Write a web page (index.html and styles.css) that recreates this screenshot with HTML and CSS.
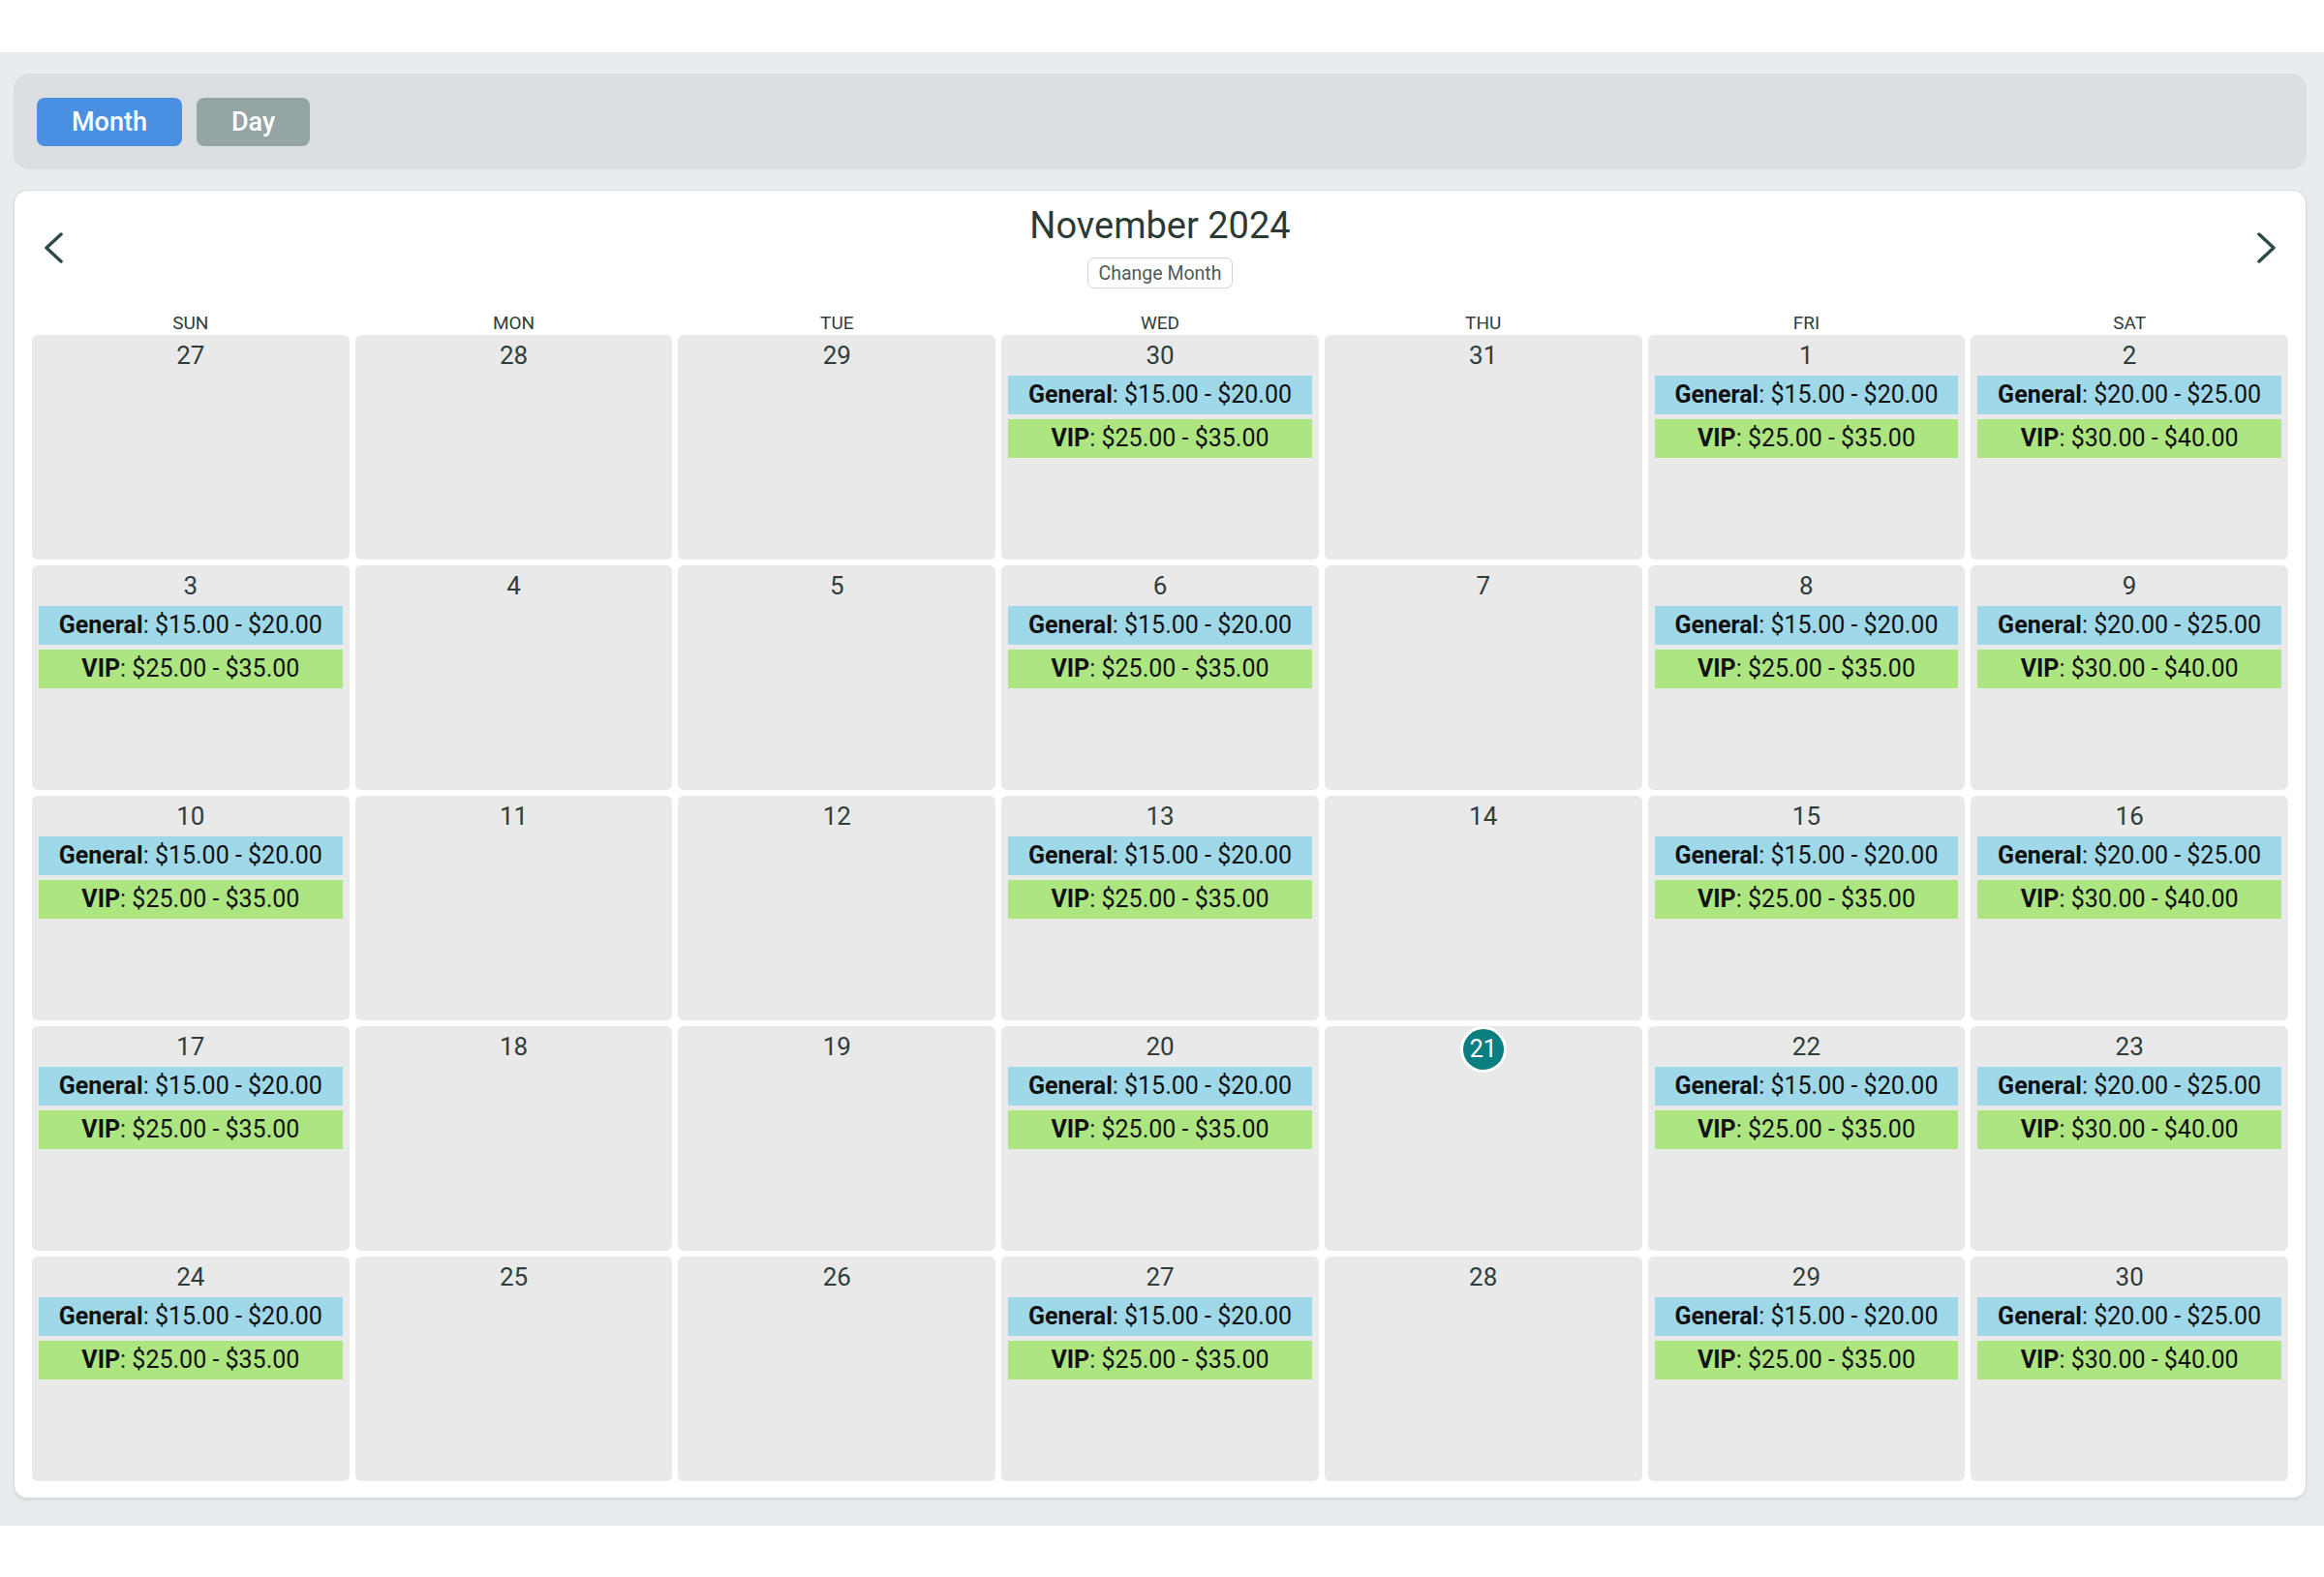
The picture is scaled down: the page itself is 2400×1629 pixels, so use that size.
FILE: index.html
```html
<!DOCTYPE html>
<html lang="en">
<head>
    <meta charset="UTF-8">
    <meta name="viewport" content="width=device-width, initial-scale=1.0">
    <title>Ticket Calendar</title>
    <link rel="stylesheet" href="styles.css">
</head>
<body>
    <div class="page">
        <div class="view-toolbar">
            <button class="view-btn active">Month</button>
            <button class="view-btn">Day</button>
        </div>

        <div class="calendar-card">
            <div class="calendar-header">
                <button class="nav-btn prev-btn" aria-label="Previous month">
                    <svg width="22" height="34" viewBox="0 0 22 34"><polyline points="19,3 4,17 19,31" fill="none" stroke="#2f4a4a" stroke-width="3.5" stroke-linecap="round" stroke-linejoin="round"/></svg>
                </button>
                <div class="month-title">
                    <h2>November 2024</h2>
                    <button class="change-month-btn">Change Month</button>
                </div>
                <button class="nav-btn next-btn" aria-label="Next month">
                    <svg width="22" height="34" viewBox="0 0 22 34"><polyline points="3,3 18,17 3,31" fill="none" stroke="#2f4a4a" stroke-width="3.5" stroke-linecap="round" stroke-linejoin="round"/></svg>
                </button>
            </div>

            <div class="weekdays">
                <div>SUN</div>
                <div>MON</div>
                <div>TUE</div>
                <div>WED</div>
                <div>THU</div>
                <div>FRI</div>
                <div>SAT</div>
            </div>

            <div class="month-grid" id="month-grid"></div>
        </div>
    </div>

    <script>
        document.addEventListener('DOMContentLoaded', function() {
            const grid = document.getElementById('month-grid');
            const today = 21;

            // prices by weekday (0 = Sunday)
            const prices = {
                0: { general: '$15.00 - $20.00', vip: '$25.00 - $35.00' },
                3: { general: '$15.00 - $20.00', vip: '$25.00 - $35.00' },
                5: { general: '$15.00 - $20.00', vip: '$25.00 - $35.00' },
                6: { general: '$20.00 - $25.00', vip: '$30.00 - $40.00' }
            };

            const days = [];
            [27, 28, 29, 30, 31].forEach(d => days.push({ day: d, current: false }));
            for (let d = 1; d <= 30; d++) days.push({ day: d, current: true });

            days.forEach((item, i) => {
                const weekday = i % 7;
                const cell = document.createElement('div');
                cell.className = 'day-cell';

                const num = document.createElement('div');
                num.className = 'day-number';
                if (item.current && item.day === today) num.classList.add('today');
                num.textContent = item.day;
                cell.appendChild(num);

                // only Oct 30 of the previous month has tickets
                const hasPrices = prices[weekday] && (item.current || item.day === 30);
                if (hasPrices) {
                    const p = prices[weekday];
                    cell.innerHTML += `
                        <div class="price general"><strong>General</strong>: ${p.general}</div>
                        <div class="price vip"><strong>VIP</strong>: ${p.vip}</div>
                    `;
                }
                grid.appendChild(cell);
            });
        });
    </script>
</body>
</html>
```

FILE: styles.css
```css
body {
    margin: 0;
    background: #ffffff;
    font-family: Roboto, "Liberation Sans", Arial, sans-serif;
    color: #2f3d3b;
}

.page {
    margin-top: 54px;
    background: #e8ecee;
    padding: 22px 18px 28px 14px;
}

.view-toolbar {
    display: flex;
    gap: 15px;
    background: #dcdfe2;
    border-radius: 16px;
    padding: 25px 24px 24px;
}

.view-btn {
    height: 50px;
    padding: 0 36px;
    border: none;
    border-radius: 8px;
    background: #95a5a6;
    color: #ffffff;
    font-family: inherit;
    font-size: 27px;
    font-weight: 500;
    cursor: pointer;
}

.view-btn.active {
    background: #4a90e2;
}

.calendar-card {
    margin-top: 21px;
    background: #ffffff;
    border: 1px solid #d8d8d8;
    border-radius: 14px;
    box-shadow: 0 2px 3px rgba(0, 0, 0, 0.08);
    padding: 13px 18px 17px;
}

.calendar-header {
    display: flex;
    align-items: center;
    justify-content: space-between;
}

.nav-btn {
    background: none;
    border: none;
    padding: 3px 11px 0;
    cursor: pointer;
    display: flex;
}

.month-title {
    display: flex;
    flex-direction: column;
    align-items: center;
}

.month-title h2 {
    margin: 0;
    font-size: 38px;
    font-weight: 400;
    line-height: 47px;
    color: #2c3a36;
}

.change-month-btn {
    margin-top: 9px;
    height: 32px;
    padding: 0 11px;
    background: #ffffff;
    border: 1px solid #cfd3d4;
    border-radius: 7px;
    color: #4f5a5a;
    font-family: inherit;
    font-size: 19.5px;
    cursor: pointer;
}

.weekdays {
    display: grid;
    grid-template-columns: repeat(7, 1fr);
    gap: 6px;
    margin-top: 24px;
    text-align: center;
    font-size: 19px;
    line-height: 23px;
    color: #2f3d3b;
}

.month-grid {
    display: grid;
    grid-template-columns: repeat(7, 1fr);
    grid-auto-rows: 232px;
    gap: 6px;
    margin-top: 1px;
}

.day-cell {
    background: #e9e9e9;
    border-radius: 6px;
    padding: 5px 7px;
    display: flex;
    flex-direction: column;
    align-items: stretch;
}

.day-number {
    align-self: center;
    font-size: 26px;
    line-height: 32px;
    color: #2f3d3b;
    margin-bottom: 5px;
}

.day-number.today {
    width: 42px;
    height: 42px;
    line-height: 42px;
    margin-top: -5px;
    margin-bottom: 0;
    text-align: center;
    border-radius: 50%;
    border: 3px solid #ffffff;
    background: #0b7f7f;
    color: #ffffff;
    font-size: 25px;
}

.price {
    height: 40px;
    line-height: 40px;
    text-align: center;
    font-size: 25px;
    color: #111111;
    margin-bottom: 5px;
    white-space: nowrap;
}

.price strong {
    font-weight: 700;
}

.price.general {
    background: #9fd8e9;
}

.price.vip {
    background: #ade680;
}
```
